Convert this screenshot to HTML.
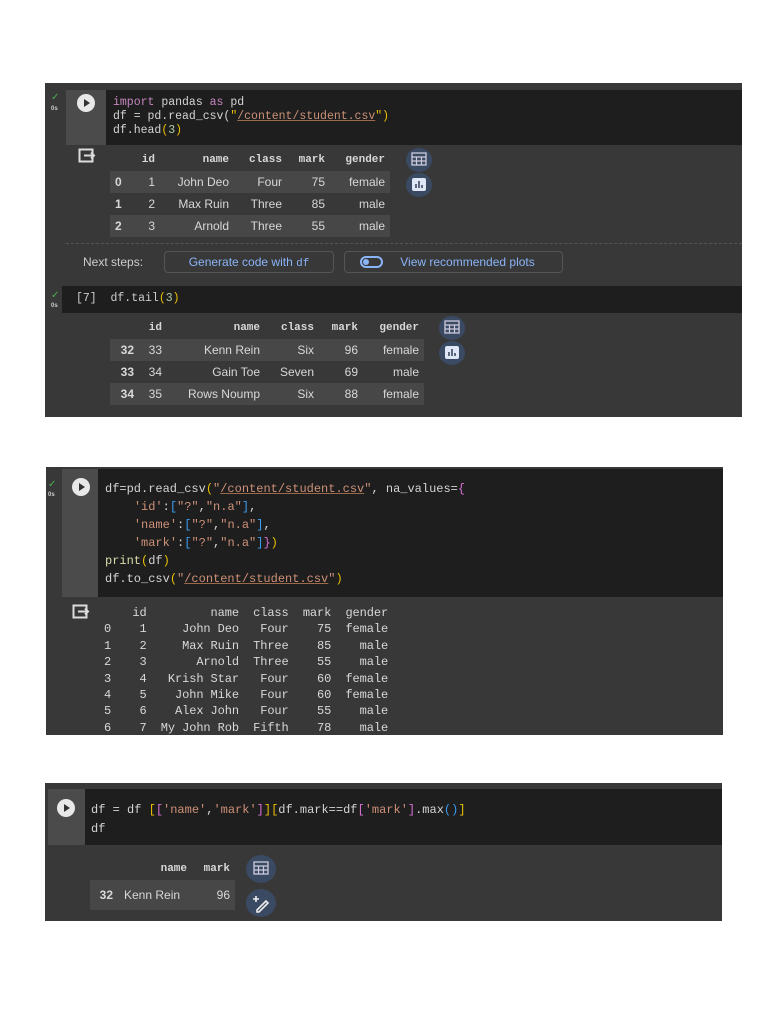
<!DOCTYPE html>
<html><head><meta charset="utf-8"><style>
body{margin:0;width:768px;height:1024px;background:#fff;position:relative;overflow:hidden;font-family:"Liberation Sans",sans-serif}
.a{position:absolute}
.mono{font-family:"Liberation Mono","DejaVu Sans Mono",monospace}
.box{background:#383838}
.code{background:#1e1e1e}
.gut{background:#4b4b4b}
.t{color:#d4d4d4;font-size:11.5px;white-space:pre}
.kw{color:#c586c0}.s{color:#ce9178;text-decoration:underline;text-decoration-color:#9a6a4a}.y{color:#e8c000}.q{color:#ce9178}.b{color:#3a9df0}.p{color:#da70d6}.n{color:#b5cea8}.f{color:#dcdcaa}
.run{width:18px;height:18px;border-radius:50%;background:#e8e8e8}
.run:after{content:"";position:absolute;left:7px;top:5px;border-left:6px solid #333;border-top:4px solid transparent;border-bottom:4px solid transparent}
.chk{color:#4caf50;font-size:10px}
.os{color:#ccc;font-size:6px;font-weight:bold}
table{border-collapse:collapse;color:#d8d8d8;font-size:12px;table-layout:fixed}
td,th{text-align:right;padding:0 5px;height:22px;white-space:nowrap;overflow:visible}
th{font-family:"Liberation Mono",monospace;font-weight:bold;font-size:11px}
tr.st td{background:#474747}
.ic{width:26px;height:24px;border-radius:50%;background:#3b4a63}
.btn{border:1px solid #555;border-radius:4px;color:#8ab4f8;font-size:12px;height:20px;line-height:20px;box-sizing:border-box;height:22px;text-align:center}
</style></head><body>

<!-- Section 1 -->
<div class="a box" style="left:45px;top:83px;width:697px;height:334px"></div>
<div class="a gut" style="left:66px;top:90px;width:40px;height:55px"></div>
<div class="a code" style="left:106px;top:90px;width:636px;height:55px"></div>
<div class="a chk" style="left:51px;top:92px">✓</div><div class="a os" style="left:51px;top:106px">0s</div>
<div class="a run" style="left:77px;top:94px"></div>
<div class="a mono t" style="left:113px;top:96px;line-height:14px"><span class="kw">import</span> pandas <span class="kw">as</span> pd
df = pd.read_csv(<span class="y">"</span><span class="s">/content/student.csv</span><span class="y">"</span><span class="y">)</span>
df.head<span class="y">(</span><span class="n">3</span><span class="y">)</span></div>
<svg class="a" style="left:78px;top:148px" width="18" height="16"><rect x="1.5" y="1.5" width="13" height="12" fill="none" stroke="#ddd" stroke-width="2"/><path d="M6 7.5h10M13 4.5l3 3-3 3" fill="none" stroke="#ddd" stroke-width="2"/></svg>
<table class="a" style="left:110px;top:149px;width:280px">
<colgroup><col style="width:25px"><col style="width:25px"><col style="width:74px"><col style="width:53px"><col style="width:43px"><col style="width:60px"></colgroup>
<tr><th></th><th>id</th><th>name</th><th>class</th><th>mark</th><th>gender</th></tr>
<tr class="st"><td style="text-align:left;font-weight:bold">0</td><td>1</td><td>John Deo</td><td>Four</td><td>75</td><td>female</td></tr>
<tr><td style="text-align:left;font-weight:bold">1</td><td>2</td><td>Max Ruin</td><td>Three</td><td>85</td><td>male</td></tr>
<tr class="st"><td style="text-align:left;font-weight:bold">2</td><td>3</td><td>Arnold</td><td>Three</td><td>55</td><td>male</td></tr>
</table>
<div class="a ic" style="left:406px;top:148px"></div>
<svg class="a" style="left:411px;top:152px" width="16" height="14"><rect x="1" y="1" width="14" height="12" fill="none" stroke="#ccd" stroke-width="1.3"/><path d="M1 5h14M1 9h14M5.5 5v8M10.5 5v8" stroke="#ccd" stroke-width="1.2"/></svg>
<div class="a ic" style="left:406px;top:173px"></div>
<div class="a" style="left:412px;top:178px;width:14px;height:13px;background:#dfe6f5;border-radius:2px"></div>
<svg class="a" style="left:412px;top:178px" width="14" height="13"><path d="M4 10V6M7 10V3M10 10V7" stroke="#3b4a63" stroke-width="1.6"/></svg>
<div class="a" style="left:66px;top:243px;width:676px;border-top:1px dashed #555"></div>
<div class="a" style="left:83px;top:255px;color:#ccc;font-size:12px">Next steps:</div>
<div class="a btn" style="left:164px;top:251px;width:170px">Generate code with <span class="mono" style="font-size:11px">df</span></div>
<div class="a btn" style="left:344px;top:251px;width:219px;padding-left:28px">View recommended plots</div>
<div class="a" style="left:360px;top:256px;width:19px;height:8px;border:2px solid #8ab4f8;border-radius:6px"></div>
<div class="a" style="left:363px;top:259px;width:6px;height:6px;background:#8ab4f8;border-radius:50%"></div>
<div class="a code" style="left:62px;top:286px;width:680px;height:27px"></div>
<div class="a chk" style="left:51px;top:290px">✓</div><div class="a os" style="left:51px;top:303px">0s</div>
<div class="a mono t" style="left:76px;top:292px;color:#ccc">[7]  df.tail<span class="y">(</span><span class="n">3</span><span class="y">)</span></div>
<table class="a" style="left:110px;top:317px;width:314px">
<colgroup><col style="width:29px"><col style="width:28px"><col style="width:98px"><col style="width:54px"><col style="width:44px"><col style="width:61px"></colgroup>
<tr><th></th><th>id</th><th>name</th><th>class</th><th>mark</th><th>gender</th></tr>
<tr class="st"><td style="font-weight:bold">32</td><td>33</td><td>Kenn Rein</td><td>Six</td><td>96</td><td>female</td></tr>
<tr><td style="font-weight:bold">33</td><td>34</td><td>Gain Toe</td><td>Seven</td><td>69</td><td>male</td></tr>
<tr class="st"><td style="font-weight:bold">34</td><td>35</td><td>Rows Noump</td><td>Six</td><td>88</td><td>female</td></tr>
</table>
<div class="a ic" style="left:439px;top:316px"></div>
<svg class="a" style="left:444px;top:320px" width="16" height="14"><rect x="1" y="1" width="14" height="12" fill="none" stroke="#ccd" stroke-width="1.3"/><path d="M1 5h14M1 9h14M5.5 5v8M10.5 5v8" stroke="#ccd" stroke-width="1.2"/></svg>
<div class="a ic" style="left:439px;top:341px"></div>
<div class="a" style="left:445px;top:346px;width:14px;height:13px;background:#dfe6f5;border-radius:2px"></div>
<svg class="a" style="left:445px;top:346px" width="14" height="13"><path d="M4 10V6M7 10V3M10 10V7" stroke="#3b4a63" stroke-width="1.6"/></svg>

<!-- Section 2 -->
<div class="a box" style="left:46px;top:467px;width:677px;height:268px"></div>
<div class="a gut" style="left:62px;top:469px;width:36px;height:128px"></div>
<div class="a code" style="left:98px;top:469px;width:625px;height:128px"></div>
<div class="a chk" style="left:48px;top:479px">✓</div><div class="a os" style="left:48px;top:492px">0s</div>
<div class="a run" style="left:72px;top:478px"></div>
<div class="a mono t" style="left:105px;top:480px;line-height:18px;font-size:12px">df=pd.read_csv<span class="y">(</span><span class="q">"</span><span class="s">/content/student.csv</span><span class="q">"</span>, na_values=<span class="p">{</span>
    <span class="q">'id'</span>:<span class="b">[</span><span class="q">"?"</span>,<span class="q">"n.a"</span><span class="b">]</span>,
    <span class="q">'name'</span>:<span class="b">[</span><span class="q">"?"</span>,<span class="q">"n.a"</span><span class="b">]</span>,
    <span class="q">'mark'</span>:<span class="b">[</span><span class="q">"?"</span>,<span class="q">"n.a"</span><span class="b">]</span><span class="p">}</span><span class="y">)</span>
<span class="f">print</span><span class="y">(</span>df<span class="y">)</span>
df.to_csv<span class="y">(</span><span class="q">"</span><span class="s">/content/student.csv</span><span class="q">"</span><span class="y">)</span></div>
<svg class="a" style="left:72px;top:604px" width="18" height="16"><rect x="1.5" y="1.5" width="13" height="12" fill="none" stroke="#ddd" stroke-width="2"/><path d="M6 7.5h10M13 4.5l3 3-3 3" fill="none" stroke="#ddd" stroke-width="2"/></svg>
<div class="a mono t" style="left:104px;top:605px;line-height:16.4px;font-size:12px;letter-spacing:-0.1px;color:#d8d8d8">    id         name  class  mark  gender
0    1     John Deo   Four    75  female
1    2     Max Ruin  Three    85    male
2    3       Arnold  Three    55    male
3    4   Krish Star   Four    60  female
4    5    John Mike   Four    60  female
5    6    Alex John   Four    55    male
6    7  My John Rob  Fifth    78    male</div>

<!-- Section 3 -->
<div class="a box" style="left:45px;top:783px;width:677px;height:138px"></div>
<div class="a gut" style="left:48px;top:789px;width:37px;height:56px"></div>
<div class="a code" style="left:85px;top:789px;width:637px;height:56px"></div>
<div class="a run" style="left:57px;top:799px"></div>
<div class="a mono t" style="left:91px;top:801px;line-height:19px;font-size:12px">df = df <span class="y">[</span><span class="p">[</span><span class="q">'name'</span>,<span class="q">'mark'</span><span class="p">]</span><span class="y">]</span><span class="y">[</span>df.mark==df<span class="p">[</span><span class="q">'mark'</span><span class="p">]</span>.max<span class="b">()</span><span class="y">]</span>
df</div>
<table class="a" style="left:90px;top:858px;width:145px">
<colgroup><col style="width:28px"><col style="width:74px"><col style="width:43px"></colgroup>
<tr><th></th><th>name</th><th>mark</th></tr>
<tr class="st"><td style="font-weight:bold;height:30px">32</td><td style="text-align:left;padding-left:6px">Kenn Rein</td><td>96</td></tr>
</table>
<div class="a ic" style="left:246px;top:855px;width:30px;height:28px"></div>
<svg class="a" style="left:253px;top:861px" width="16" height="14"><rect x="1" y="1" width="14" height="12" fill="none" stroke="#ccd" stroke-width="1.3"/><path d="M1 5h14M1 9h14M5.5 5v8M10.5 5v8" stroke="#ccd" stroke-width="1.2"/></svg>
<div class="a ic" style="left:246px;top:889px;width:30px;height:28px"></div>
<svg class="a" style="left:251px;top:893px" width="20" height="20"><path d="M6 17l9-9 2 2-9 9H6z" fill="none" stroke="#eee" stroke-width="1.6"/><path d="M5 3v6M2 6h6" stroke="#eee" stroke-width="1.6"/></svg>
</body></html>
